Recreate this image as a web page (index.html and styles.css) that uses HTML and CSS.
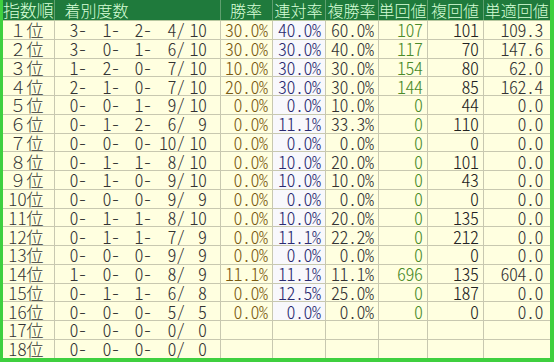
FILE: index.html
```html
<!DOCTYPE html>
<html lang="ja">
<head>
<meta charset="utf-8">
<link rel="stylesheet" href="styles.css">
</head>
<body>
<div class="frame">
<table class="tbl">
<colgroup>
<col class="c1"><col class="c2"><col class="c3"><col class="c4"><col class="c5"><col class="c6"><col class="c7"><col class="c8">
</colgroup>
<thead>
<tr><th class="h-rank">指数順</th><th class="h-dist">着別度数</th><th>勝率</th><th>連対率</th><th>複勝率</th><th>単回値</th><th>複回値</th><th>単適回値</th></tr>
</thead>
<tbody>
<tr><td class="rank"><u>１位</u></td><td class="dist"><div class="f"><span>3-</span><span>1-</span><span>2-</span><span>4/</span><span>10</span></div></td><td class="win">30.0%</td><td class="ren">40.0%</td><td class="fuku">60.0%</td><td class="tan">107</td><td class="fk">101</td><td class="tt">109.3</td></tr>
<tr><td class="rank"><u>２位</u></td><td class="dist"><div class="f"><span>3-</span><span>0-</span><span>1-</span><span>6/</span><span>10</span></div></td><td class="win">30.0%</td><td class="ren">30.0%</td><td class="fuku">40.0%</td><td class="tan">117</td><td class="fk">70</td><td class="tt">147.6</td></tr>
<tr><td class="rank"><u>３位</u></td><td class="dist"><div class="f"><span>1-</span><span>2-</span><span>0-</span><span>7/</span><span>10</span></div></td><td class="win">10.0%</td><td class="ren">30.0%</td><td class="fuku">30.0%</td><td class="tan">154</td><td class="fk">80</td><td class="tt">62.0</td></tr>
<tr><td class="rank"><u>４位</u></td><td class="dist"><div class="f"><span>2-</span><span>1-</span><span>0-</span><span>7/</span><span>10</span></div></td><td class="win">20.0%</td><td class="ren">30.0%</td><td class="fuku">30.0%</td><td class="tan">144</td><td class="fk">85</td><td class="tt">162.4</td></tr>
<tr><td class="rank"><u>５位</u></td><td class="dist"><div class="f"><span>0-</span><span>0-</span><span>1-</span><span>9/</span><span>10</span></div></td><td class="win">0.0%</td><td class="ren">0.0%</td><td class="fuku">10.0%</td><td class="tan">0</td><td class="fk">44</td><td class="tt">0.0</td></tr>
<tr><td class="rank"><u>６位</u></td><td class="dist"><div class="f"><span>0-</span><span>1-</span><span>2-</span><span>6/</span><span>9</span></div></td><td class="win">0.0%</td><td class="ren">11.1%</td><td class="fuku">33.3%</td><td class="tan">0</td><td class="fk">110</td><td class="tt">0.0</td></tr>
<tr><td class="rank"><u>７位</u></td><td class="dist"><div class="f"><span>0-</span><span>0-</span><span>0-</span><span>10/</span><span>10</span></div></td><td class="win">0.0%</td><td class="ren">0.0%</td><td class="fuku">0.0%</td><td class="tan">0</td><td class="fk">0</td><td class="tt">0.0</td></tr>
<tr><td class="rank"><u>８位</u></td><td class="dist"><div class="f"><span>0-</span><span>1-</span><span>1-</span><span>8/</span><span>10</span></div></td><td class="win">0.0%</td><td class="ren">10.0%</td><td class="fuku">20.0%</td><td class="tan">0</td><td class="fk">101</td><td class="tt">0.0</td></tr>
<tr><td class="rank"><u>９位</u></td><td class="dist"><div class="f"><span>0-</span><span>1-</span><span>0-</span><span>9/</span><span>10</span></div></td><td class="win">0.0%</td><td class="ren">10.0%</td><td class="fuku">10.0%</td><td class="tan">0</td><td class="fk">43</td><td class="tt">0.0</td></tr>
<tr><td class="rank"><u>10位</u></td><td class="dist"><div class="f"><span>0-</span><span>0-</span><span>0-</span><span>9/</span><span>9</span></div></td><td class="win">0.0%</td><td class="ren">0.0%</td><td class="fuku">0.0%</td><td class="tan">0</td><td class="fk">0</td><td class="tt">0.0</td></tr>
<tr><td class="rank"><u>11位</u></td><td class="dist"><div class="f"><span>0-</span><span>1-</span><span>1-</span><span>8/</span><span>10</span></div></td><td class="win">0.0%</td><td class="ren">10.0%</td><td class="fuku">20.0%</td><td class="tan">0</td><td class="fk">135</td><td class="tt">0.0</td></tr>
<tr><td class="rank"><u>12位</u></td><td class="dist"><div class="f"><span>0-</span><span>1-</span><span>1-</span><span>7/</span><span>9</span></div></td><td class="win">0.0%</td><td class="ren">11.1%</td><td class="fuku">22.2%</td><td class="tan">0</td><td class="fk">212</td><td class="tt">0.0</td></tr>
<tr><td class="rank"><u>13位</u></td><td class="dist"><div class="f"><span>0-</span><span>0-</span><span>0-</span><span>9/</span><span>9</span></div></td><td class="win">0.0%</td><td class="ren">0.0%</td><td class="fuku">0.0%</td><td class="tan">0</td><td class="fk">0</td><td class="tt">0.0</td></tr>
<tr><td class="rank"><u>14位</u></td><td class="dist"><div class="f"><span>1-</span><span>0-</span><span>0-</span><span>8/</span><span>9</span></div></td><td class="win">11.1%</td><td class="ren">11.1%</td><td class="fuku">11.1%</td><td class="tan">696</td><td class="fk">135</td><td class="tt">604.0</td></tr>
<tr><td class="rank"><u>15位</u></td><td class="dist"><div class="f"><span>0-</span><span>1-</span><span>1-</span><span>6/</span><span>8</span></div></td><td class="win">0.0%</td><td class="ren">12.5%</td><td class="fuku">25.0%</td><td class="tan">0</td><td class="fk">187</td><td class="tt">0.0</td></tr>
<tr><td class="rank"><u>16位</u></td><td class="dist"><div class="f"><span>0-</span><span>0-</span><span>0-</span><span>5/</span><span>5</span></div></td><td class="win">0.0%</td><td class="ren">0.0%</td><td class="fuku">0.0%</td><td class="tan">0</td><td class="fk">0</td><td class="tt">0.0</td></tr>
<tr><td class="rank"><u>17位</u></td><td class="dist"><div class="f"><span>0-</span><span>0-</span><span>0-</span><span>0/</span><span>0</span></div></td><td></td><td></td><td></td><td></td><td></td><td></td></tr>
<tr><td class="rank"><u>18位</u></td><td class="dist"><div class="f"><span>0-</span><span>0-</span><span>0-</span><span>0/</span><span>0</span></div></td><td></td><td></td><td></td><td></td><td></td><td></td></tr>
</tbody>
</table>
</div>
</body>
</html>
```
FILE: styles.css
```css
html, body {
  margin: 0;
  padding: 0;
  background: #ffffe0;
}
.frame {
  width: 547px;
  height: 358px;
  overflow: hidden;
  border-left: 3px solid #3fd03f;
  border-right: 4px solid #3fd03f;
  border-bottom: 4px solid #3fd03f;
  background: #ffffe0;
  font-family: "Noto Sans CJK JP", sans-serif;
  font-weight: 300;
  font-feature-settings: "hwid" 1;
  font-size: 18px;
  letter-spacing: -0.5px;
  color: #333;
}
.tbl {
  border-collapse: collapse;
  table-layout: fixed;
  width: 547px;
}
.c1 { width: 51px; }
.c2 { width: 166px; }
.c3 { width: 52px; }
.c4 { width: 53px; }
.c5 { width: 53px; }
.c6 { width: 49px; }
.c7 { width: 56px; }
.c8 { width: 67px; }
.tbl th {
  height: 20px;
  padding: 0;
  background: #1f7a3c;
  color: #d8ffd8;
  font-weight: 300;
  font-size: 16px;
  letter-spacing: 0;
  line-height: 20px;
  text-align: center;
  white-space: nowrap;
  border-right: 1px solid #5f9f6f;
  border-bottom: 1px solid #b8c8a0;
}
.tbl th.h-rank { text-align: left; font-size: 17px; letter-spacing: -0.3px; }
.tbl th.h-dist { text-align: left; padding-left: 10px; }
.tbl td {
  height: 17.75px;
  padding: 0 4px 0 0;
  line-height: 17px;
  text-align: right;
  white-space: nowrap;
  border: 1px solid #c8c8b0;
  border-top: none;
  overflow: hidden;
}
.tbl tr > *:first-child { border-left: none; }
.tbl tr > *:last-child { border-right: none; }
.tbl td.rank { padding-right: 10px; color: #333; font-size: 17px; letter-spacing: 0; font-feature-settings: normal; }
.tbl td.rank u { text-decoration-thickness: 1px; text-underline-offset: 2px; }
.tbl td.dist { padding: 0; }
.f {
  display: grid;
  grid-template-columns: 32px 33px 32px 33px 22px;
  justify-items: end;
  color: #333;
}
.tbl td.win { color: #7a5a10; }
.tbl td.ren { color: #2a2a70; background: #f8f8fc; }
.tbl td.fuku { color: #333; }
.tbl td.tan { color: #4a8a2a; }
.tbl td.fk { color: #222; }
.tbl td.tt { color: #333; padding-right: 7px; }
```
